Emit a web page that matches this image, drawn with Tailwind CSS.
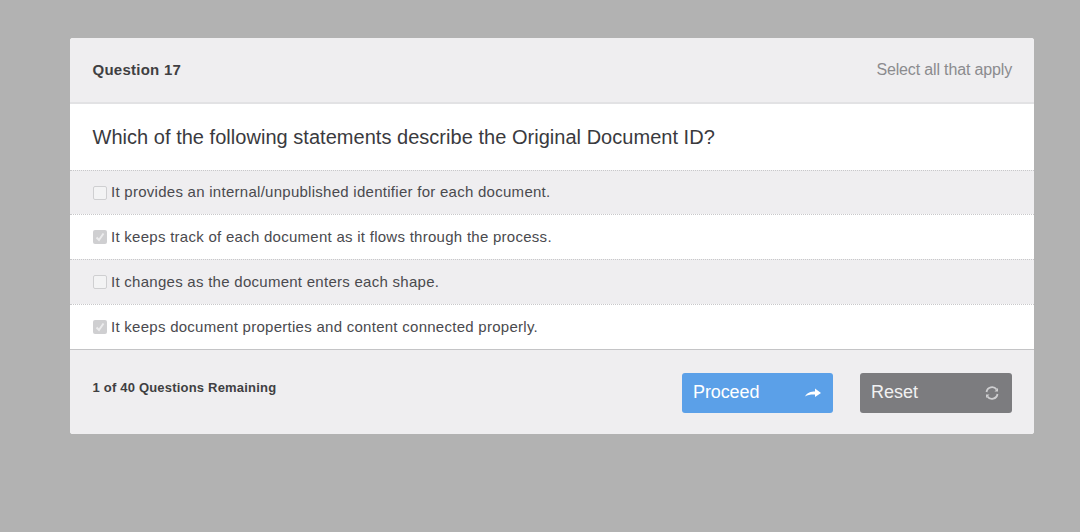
<!DOCTYPE html>
<html lang="en">
<head>
    <meta charset="UTF-8">
    <script src="https://cdn.jsdelivr.net/npm/@tailwindcss/browser@4"></script>
    <title>Question 17</title>
</head>
<body class="w-[1080px] h-[532px] overflow-hidden bg-[#b2b2b2] font-['Liberation_Sans',Arial,sans-serif] text-[#3c3c40] pt-[38px] pl-[70px]">
    <div class="w-[964px] h-[396px] flex flex-col rounded-[3px] overflow-hidden bg-white">
        <div class="h-[66px] flex items-center justify-between pl-[22.5px] pr-[22px] bg-[#efeef0] border-b-2 border-[#e2e2e4]">
            <h2 class="text-[15px] font-bold text-[#3f3f42] tracking-[0.25px]">Question 17</h2>
            <span class="text-[16px] text-[#8b8b8e] tracking-[-0.15px]">Select all that apply</span>
        </div>
        <div class="h-[66px] flex items-center pl-[22.5px] text-[20px] text-[#3a3a3e] tracking-[0.03px]">Which of the following statements describe the Original Document ID?</div>

        <div class="h-[44px] flex items-center gap-[4px] pl-[23px] bg-[#efeef0] border-t border-dotted border-[#c8c8ca] text-[15px] text-[#4a4a4e] tracking-[0.27px]">
            <span class="w-[14px] h-[14px] rounded-[2px] border border-[#cfcfd1] bg-[#f3f3f4]"></span>
            <span>It provides an internal/unpublished identifier for each document.</span>
        </div>
        <div class="h-[45px] flex items-center gap-[4px] pl-[23px] bg-white border-t border-dotted border-[#c8c8ca] text-[15px] text-[#4a4a4e] tracking-[0.27px]">
            <span class="w-[14px] h-[14px] rounded-[2px] bg-[#cfcfd1] flex items-center justify-center">
                <svg class="w-[12px] h-[12px]" viewBox="0 0 12 12" fill="none" stroke="#ececed" stroke-width="2"><path d="M2.5 6.5 5 9l4.5-6.5"/></svg>
            </span>
            <span>It keeps track of each document as it flows through the process.</span>
        </div>
        <div class="h-[45px] flex items-center gap-[4px] pl-[23px] bg-[#efeef0] border-t border-dotted border-[#c8c8ca] text-[15px] text-[#4a4a4e] tracking-[0.27px]">
            <span class="w-[14px] h-[14px] rounded-[2px] border border-[#cfcfd1] bg-[#f3f3f4]"></span>
            <span>It changes as the document enters each shape.</span>
        </div>
        <div class="h-[45px] flex items-center gap-[4px] pl-[23px] bg-white border-t border-dotted border-[#c8c8ca] text-[15px] text-[#4a4a4e] tracking-[0.27px]">
            <span class="w-[14px] h-[14px] rounded-[2px] bg-[#cfcfd1] flex items-center justify-center">
                <svg class="w-[12px] h-[12px]" viewBox="0 0 12 12" fill="none" stroke="#ececed" stroke-width="2"><path d="M2.5 6.5 5 9l4.5-6.5"/></svg>
            </span>
            <span>It keeps document properties and content connected properly.</span>
        </div>

        <div class="flex-1 flex items-center justify-between pl-[22.5px] pr-[22px] bg-[#efeef0] border-t border-[#c4c4c6]">
            <span class="text-[13px] font-bold text-[#3f3f42] tracking-[0.2px] -mt-[8px]">1 of 40 Questions Remaining</span>
            <div class="flex gap-[27px] mt-[1px]">
                <button class="w-[151px] h-[40px] flex items-center justify-between pl-[11px] pr-[11px] rounded-[3px] bg-[#5ba0e8] text-white text-[18px] tracking-[-0.1px]">
                    <span>Proceed</span>
                    <svg class="w-[18px] h-[12px]" viewBox="0 0 18 12" fill="#fff"><path d="M1 9.5C3 5.5 7 4.5 11 4.5V1.5L17 6l-6 4V7.5C7 7.3 4 7.8 1 9.5z"/></svg>
                </button>
                <button class="w-[152px] h-[40px] flex items-center justify-between pl-[11px] pr-[12px] rounded-[3px] bg-[#7c7c7f] text-white text-[18px]">
                    <span class="text-[#f1f1f2]">Reset</span>
                    <svg class="w-[16px] h-[16px]" viewBox="0 0 16 16" fill="none" stroke="#cfcfd1" stroke-width="1.8"><path d="M2.5 7A5.6 5.6 0 0 1 12.6 4.6"/><path d="M13.5 9A5.6 5.6 0 0 1 3.4 11.4"/><path d="M14 3v3.5h-3.5z" fill="#cfcfd1" stroke="none"/><path d="M2 13V9.500h3.500z" fill="#cfcfd1" stroke="none"/></svg>
                </button>
            </div>
        </div>
    </div>
</body>
</html>
